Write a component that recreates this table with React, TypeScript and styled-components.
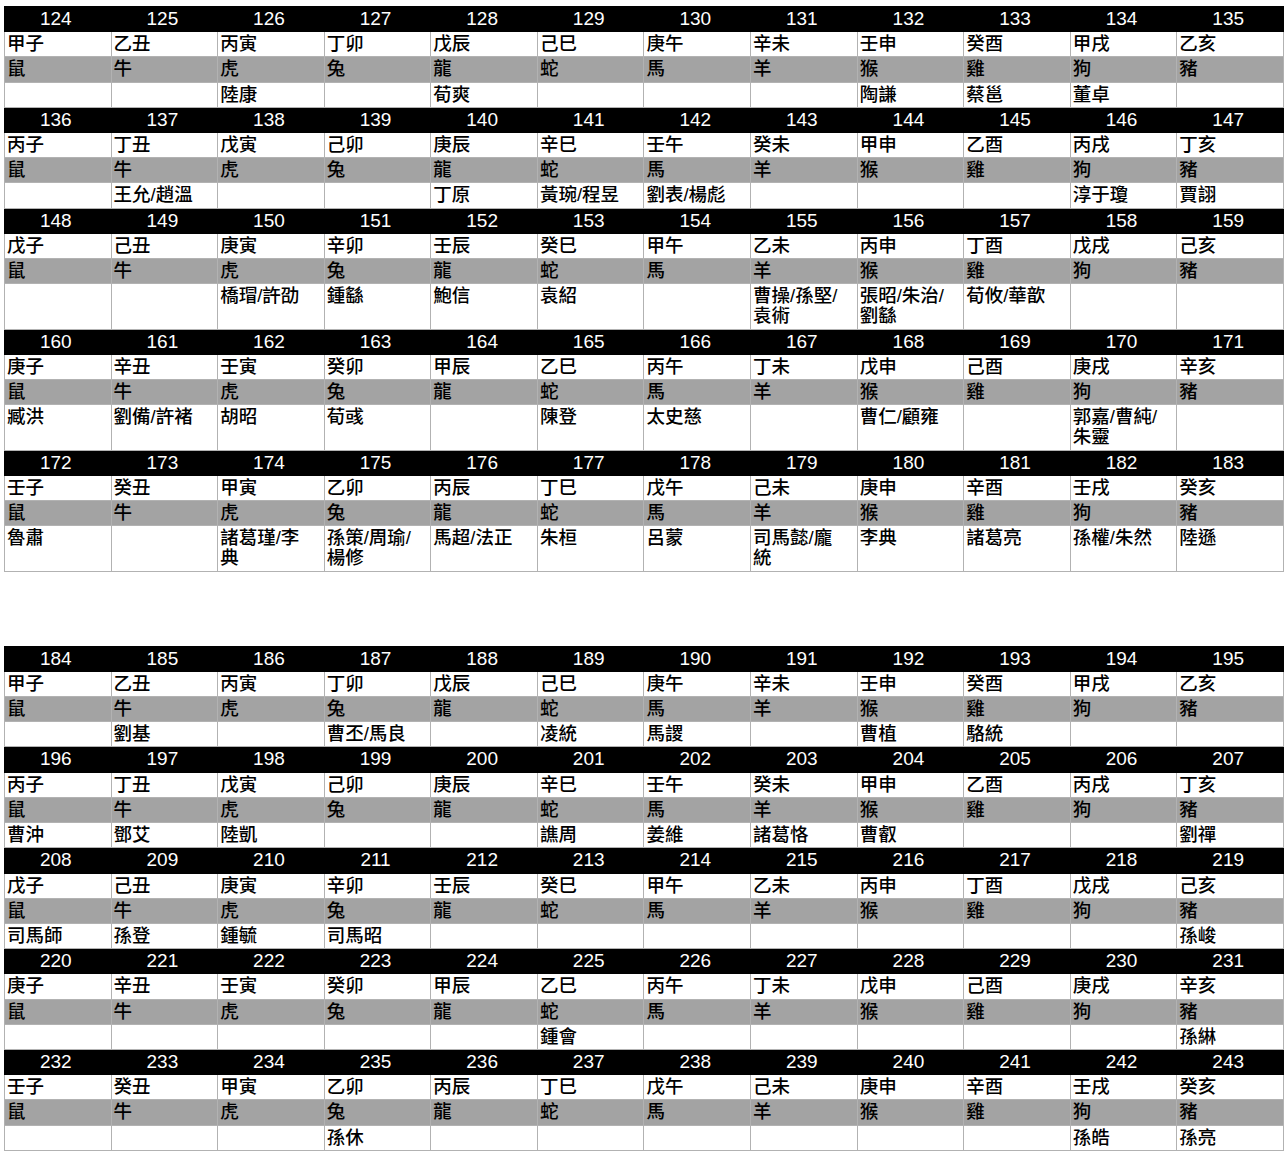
import React, { Fragment } from 'react';
import styled, { createGlobalStyle } from 'styled-components';

const GlobalStyle = createGlobalStyle`
  html, body {
    margin: 0;
    padding: 0;
    background: #ffffff;
  }
`;

const STEMS = '甲乙丙丁戊己庚辛壬癸';
const BRANCHES = '子丑寅卯辰巳午未申酉戌亥';
const ANIMALS = '鼠牛虎兔龍蛇馬羊猴雞狗豬';

const people: Record<number, string> = {
  126: '陸康',
  128: '荀爽',
  132: '陶謙',
  133: '蔡邕',
  134: '董卓',
  137: '王允/趙溫',
  140: '丁原',
  141: '黃琬/程昱',
  142: '劉表/楊彪',
  146: '淳于瓊',
  147: '賈詡',
  150: '橋瑁/許劭',
  151: '鍾繇',
  152: '鮑信',
  153: '袁紹',
  155: '曹操/孫堅/袁術',
  156: '張昭/朱治/劉繇',
  157: '荀攸/華歆',
  160: '臧洪',
  161: '劉備/許褚',
  162: '胡昭',
  163: '荀彧',
  165: '陳登',
  166: '太史慈',
  168: '曹仁/顧雍',
  170: '郭嘉/曹純/朱靈',
  172: '魯肅',
  174: '諸葛瑾/李典',
  175: '孫策/周瑜/楊修',
  176: '馬超/法正',
  177: '朱桓',
  178: '呂蒙',
  179: '司馬懿/龐統',
  180: '李典',
  181: '諸葛亮',
  182: '孫權/朱然',
  183: '陸遜',
  185: '劉基',
  187: '曹丕/馬良',
  189: '凌統',
  190: '馬謖',
  192: '曹植',
  193: '駱統',
  196: '曹沖',
  197: '鄧艾',
  198: '陸凱',
  201: '譙周',
  202: '姜維',
  203: '諸葛恪',
  204: '曹叡',
  207: '劉禪',
  208: '司馬師',
  209: '孫登',
  210: '鍾毓',
  211: '司馬昭',
  219: '孫峻',
  225: '鍾會',
  231: '孫綝',
  235: '孫休',
  242: '孫皓',
  243: '孫亮',
};

const ganzhi = (year: number) =>
  STEMS[(year - 4) % 10] + BRANCHES[(year - 4) % 12];

const Page = styled.div`
  display: flex;
  flex-direction: column;
  gap: 74px;
  padding: 6px 4px;
  font-family: 'Liberation Sans', 'Noto Sans CJK TC', sans-serif;
  font-size: 18.5px;
  color: #000;
`;

const Sheet = styled.table`
  width: 1280px;
  border-collapse: collapse;
  table-layout: fixed;
`;

const Cell = styled.td<{ $tone?: 'head' | 'gray' }>`
  border: 1px solid ${(p) => (p.$tone === 'head' ? '#000' : '#b2b2b2')};
  background: ${(p) =>
    p.$tone === 'head' ? '#000' : p.$tone === 'gray' ? '#a3a3a3' : '#fff'};
  color: ${(p) => (p.$tone === 'head' ? '#fff' : '#000')};
  text-align: ${(p) => (p.$tone === 'head' ? 'center' : 'left')};
  font-size: ${(p) => (p.$tone === 'head' ? '19px' : '18.5px')};
  font-weight: ${(p) => (p.$tone === 'head' ? 400 : 500)};
  vertical-align: top;
  line-height: 20.2px;
  padding: 2px 6px 2px 2px;
  overflow-wrap: anywhere;
`;

const Block = ({ start }: { start: number }) => {
  const years = Array.from({ length: 12 }, (_, i) => start + i);
  return (
    <Fragment>
      <tr>
        {years.map((y) => (
          <Cell key={y} $tone="head">
            {y}
          </Cell>
        ))}
      </tr>
      <tr>
        {years.map((y) => (
          <Cell key={y}>{ganzhi(y)}</Cell>
        ))}
      </tr>
      <tr>
        {years.map((y, i) => (
          <Cell key={y} $tone="gray">
            {ANIMALS[i]}
          </Cell>
        ))}
      </tr>
      <tr>
        {years.map((y) => (
          <Cell key={y}>{people[y] ?? ''}</Cell>
        ))}
      </tr>
    </Fragment>
  );
};

const YearTable = ({ from }: { from: number }) => (
  <Sheet>
    <tbody>
      {[0, 1, 2, 3, 4].map((b) => (
        <Block key={b} start={from + b * 12} />
      ))}
    </tbody>
  </Sheet>
);

const App = () => (
  <Fragment>
    <GlobalStyle />
    <Page>
      <YearTable from={124} />
      <YearTable from={184} />
    </Page>
  </Fragment>
);

export default App;
